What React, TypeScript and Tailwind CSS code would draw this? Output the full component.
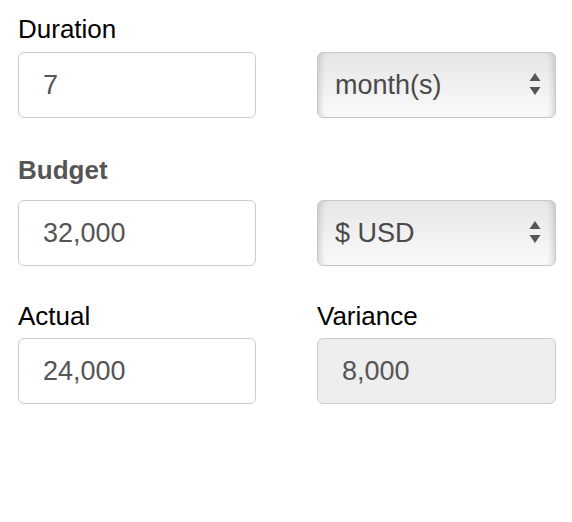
import React from 'react';

const font = { fontFamily: '"Liberation Sans", Arial, sans-serif' };

const Arrows = () => (
  <svg width="12" height="24" viewBox="0 0 12 24" className="shrink-0">
    <path d="M6 0 L11.5 8 L0.5 8 Z" fill="#555" />
    <path d="M0.5 14 L11.5 14 L6 22 Z" fill="#555" />
  </svg>
);

const TextBox = ({ value, disabled }: { value: string; disabled?: boolean }) => (
  <div
    className={`w-[238px] h-[66px] rounded-[6px] border border-[#cccccc] flex items-center pl-[24px] text-[27px] text-[#555555] ${
      disabled ? 'bg-[#eeeeee]' : 'bg-white'
    }`}
  >
    {value}
  </div>
);

const SelectBox = ({ value }: { value: string }) => (
  <div className="w-[239px] h-[66px] rounded-[6px] border border-[#c8c8c8] bg-gradient-to-b from-[#e6e6e6] to-[#fafafa] shadow-[inset_7px_0_6px_-5px_rgba(0,0,0,0.16),inset_-7px_0_6px_-5px_rgba(0,0,0,0.16)] flex items-center justify-between pl-[17px] pr-[14px] text-[27px] text-[#4a4a4a]">
    <span>{value}</span>
    <Arrows />
  </div>
);

const App = () => {
  return (
    <div className="w-[572px] h-[522px] bg-white pt-[14px] pl-[18px]" style={font}>
      <div className="grid grid-cols-[238px_239px] gap-x-[61px]">
        <div className="text-[26px] leading-[30px] text-black">Duration</div>
        <div></div>
        <div className="mt-[8px]">
          <TextBox value="7" />
        </div>
        <div className="mt-[8px]">
          <SelectBox value="month(s)" />
        </div>

        <div className="mt-[37px] text-[26px] leading-[30px] font-bold text-[#555555]">Budget</div>
        <div></div>
        <div className="mt-[15px]">
          <TextBox value="32,000" />
        </div>
        <div className="mt-[15px]">
          <SelectBox value="$ USD" />
        </div>

        <div className="mt-[35px] text-[26px] leading-[30px] text-black">Actual</div>
        <div className="mt-[35px] text-[26px] leading-[30px] text-black">Variance</div>
        <div className="mt-[7px]">
          <TextBox value="24,000" />
        </div>
        <div className="mt-[7px]">
          <div className="w-[239px] h-[66px] rounded-[6px] border border-[#cccccc] bg-[#eeeeee] flex items-center pl-[24px] text-[27px] text-[#555555]">
            8,000
          </div>
        </div>
      </div>
    </div>
  );
};

export default App;
